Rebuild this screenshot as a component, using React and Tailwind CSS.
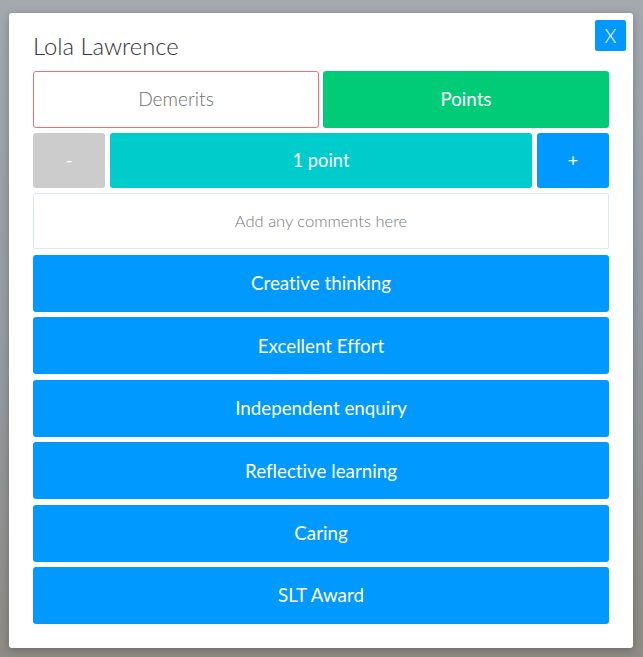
import { useState } from 'react';

const behaviours = [
  'Creative thinking',
  'Excellent Effort',
  'Independent enquiry',
  'Reflective learning',
  'Caring',
  'SLT Award',
];

export default function App() {
  const [mode, setMode] = useState('points');
  const [count, setCount] = useState(1);
  const [comment, setComment] = useState('');

  return (
    <div className="h-[657px] w-full overflow-hidden bg-gradient-to-b from-[#a4a8af] via-[#979ca4] to-[#8e8b84] pl-[9px] pt-[13px] font-['Lato','Noto_Sans',sans-serif] [font-variant-ligatures:no-common-ligatures]">
      <div className="relative w-[624px] rounded-[3px] bg-white px-[24px] pb-[24px] pt-[17px] shadow-[0_2px_8px_rgba(0,0,0,0.25)]">
        <button className="absolute right-[7px] top-[7px] flex h-[31px] w-[31px] items-center justify-center rounded-[2px] bg-[#0099ff] text-[19px] font-light leading-none text-white">
          X
        </button>

        <h2 className="mb-[8px] h-[33px] text-[23.8px] font-light leading-[33px] text-[#333]">Lola Lawrence</h2>

        <div className="grid grid-cols-2 gap-[4px]">
          <button
            onClick={() => setMode('demerits')}
            className="h-[57px] rounded-[3px] border border-[#f26d6d] bg-white text-[19.2px] font-light text-[#6f6f6f]"
          >
            Demerits
          </button>
          <button
            onClick={() => setMode('points')}
            className="h-[57px] rounded-[3px] bg-[#00cc77] text-[18.7px] text-white"
          >
            Points
          </button>
        </div>

        <div className="mt-[5px] flex h-[55px] gap-[5px]">
          <button
            onClick={() => setCount(c => Math.max(1, c - 1))}
            className="w-[72px] rounded-[3px] bg-[#cccccc] text-[18px] text-white"
          >
            -
          </button>
          <div className="flex flex-1 items-center justify-center rounded-[3px] bg-[#00cccc] text-[18.3px] text-white">
            {count} point{count !== 1 ? 's' : ''}
          </div>
          <button
            onClick={() => setCount(c => c + 1)}
            className="w-[72px] rounded-[3px] bg-[#0099ff] text-[18px] text-white"
          >
            +
          </button>
        </div>

        <input
          value={comment}
          onChange={e => setComment(e.target.value)}
          placeholder="Add any comments here"
          className="mt-[5px] block h-[56px] w-full rounded-[2px] border border-[#dce8f7] bg-white text-center text-[16.5px] font-light text-[#555] outline-none placeholder:text-[#777]"
        />

        <div className="mt-[6px] flex flex-col gap-[5.4px]">
          {behaviours.map(b => (
            <button key={b} className="h-[57px] rounded-[3px] bg-[#0099ff] text-[18.8px] text-white">
              {b}
            </button>
          ))}
        </div>
      </div>
    </div>
  );
}
